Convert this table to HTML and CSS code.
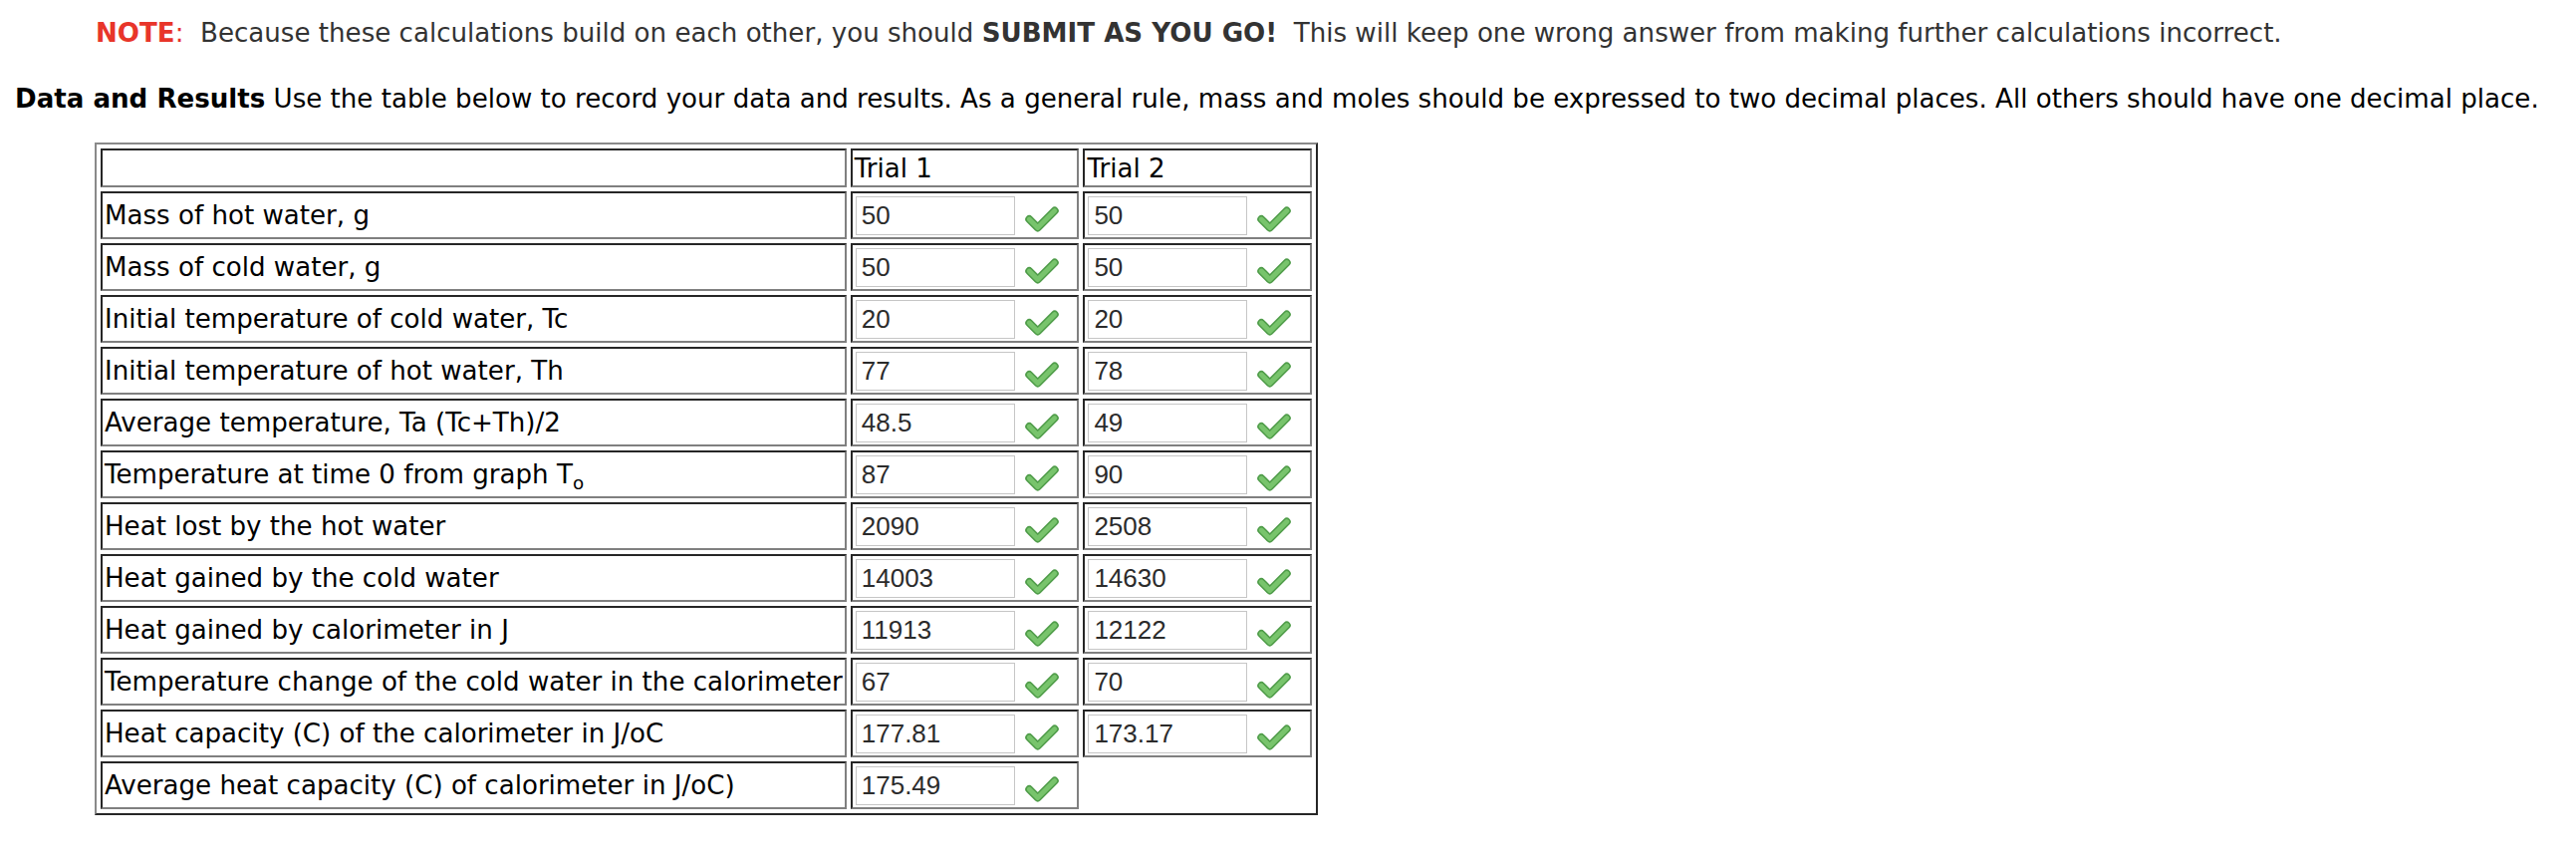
FILE: index.html
```html
<!DOCTYPE html>
<html>
<head>
<meta charset="utf-8">
<title>Data and Results</title>
<link rel="stylesheet" href="styles.css">
</head>
<body>
<div class="note"><span class="note-label">NOTE</span><span class="note-colon">:</span>&nbsp; Because these calculations build on each other, you should <b>SUBMIT AS YOU GO!</b>&nbsp; This will keep one wrong answer from making further calculations incorrect.</div>
<p class="intro"><b>Data and Results</b> Use the table below to record your data and results. As a general rule, mass and moles should be expressed to two decimal places. All others should have one decimal place.</p>
<table class="data">
  <tr class="head-row"><td class="label"></td><td class="trial">Trial 1</td><td class="trial">Trial 2</td></tr>
  <tr><td class="label">Mass of hot water, g</td><td class="trial"><div class="ans"><span class="field">50</span><svg class="check" viewBox="0 0 32 26"><polyline points="4,13 12,21 28,5"/><polyline class="in" points="4,13 12,21 28,5"/></svg></div></td><td class="trial"><div class="ans"><span class="field">50</span><svg class="check" viewBox="0 0 32 26"><polyline points="4,13 12,21 28,5"/><polyline class="in" points="4,13 12,21 28,5"/></svg></div></td></tr>
  <tr><td class="label">Mass of cold water, g</td><td class="trial"><div class="ans"><span class="field">50</span><svg class="check" viewBox="0 0 32 26"><polyline points="4,13 12,21 28,5"/><polyline class="in" points="4,13 12,21 28,5"/></svg></div></td><td class="trial"><div class="ans"><span class="field">50</span><svg class="check" viewBox="0 0 32 26"><polyline points="4,13 12,21 28,5"/><polyline class="in" points="4,13 12,21 28,5"/></svg></div></td></tr>
  <tr><td class="label">Initial temperature of cold water, Tc</td><td class="trial"><div class="ans"><span class="field">20</span><svg class="check" viewBox="0 0 32 26"><polyline points="4,13 12,21 28,5"/><polyline class="in" points="4,13 12,21 28,5"/></svg></div></td><td class="trial"><div class="ans"><span class="field">20</span><svg class="check" viewBox="0 0 32 26"><polyline points="4,13 12,21 28,5"/><polyline class="in" points="4,13 12,21 28,5"/></svg></div></td></tr>
  <tr><td class="label">Initial temperature of hot water, Th</td><td class="trial"><div class="ans"><span class="field">77</span><svg class="check" viewBox="0 0 32 26"><polyline points="4,13 12,21 28,5"/><polyline class="in" points="4,13 12,21 28,5"/></svg></div></td><td class="trial"><div class="ans"><span class="field">78</span><svg class="check" viewBox="0 0 32 26"><polyline points="4,13 12,21 28,5"/><polyline class="in" points="4,13 12,21 28,5"/></svg></div></td></tr>
  <tr><td class="label">Average temperature, Ta (Tc+Th)/2</td><td class="trial"><div class="ans"><span class="field">48.5</span><svg class="check" viewBox="0 0 32 26"><polyline points="4,13 12,21 28,5"/><polyline class="in" points="4,13 12,21 28,5"/></svg></div></td><td class="trial"><div class="ans"><span class="field">49</span><svg class="check" viewBox="0 0 32 26"><polyline points="4,13 12,21 28,5"/><polyline class="in" points="4,13 12,21 28,5"/></svg></div></td></tr>
  <tr><td class="label">Temperature at time 0 from graph T<sub>o</sub></td><td class="trial"><div class="ans"><span class="field">87</span><svg class="check" viewBox="0 0 32 26"><polyline points="4,13 12,21 28,5"/><polyline class="in" points="4,13 12,21 28,5"/></svg></div></td><td class="trial"><div class="ans"><span class="field">90</span><svg class="check" viewBox="0 0 32 26"><polyline points="4,13 12,21 28,5"/><polyline class="in" points="4,13 12,21 28,5"/></svg></div></td></tr>
  <tr><td class="label">Heat lost by the hot water</td><td class="trial"><div class="ans"><span class="field">2090</span><svg class="check" viewBox="0 0 32 26"><polyline points="4,13 12,21 28,5"/><polyline class="in" points="4,13 12,21 28,5"/></svg></div></td><td class="trial"><div class="ans"><span class="field">2508</span><svg class="check" viewBox="0 0 32 26"><polyline points="4,13 12,21 28,5"/><polyline class="in" points="4,13 12,21 28,5"/></svg></div></td></tr>
  <tr><td class="label">Heat gained by the cold water</td><td class="trial"><div class="ans"><span class="field">14003</span><svg class="check" viewBox="0 0 32 26"><polyline points="4,13 12,21 28,5"/><polyline class="in" points="4,13 12,21 28,5"/></svg></div></td><td class="trial"><div class="ans"><span class="field">14630</span><svg class="check" viewBox="0 0 32 26"><polyline points="4,13 12,21 28,5"/><polyline class="in" points="4,13 12,21 28,5"/></svg></div></td></tr>
  <tr><td class="label">Heat gained by calorimeter in J</td><td class="trial"><div class="ans"><span class="field">11913</span><svg class="check" viewBox="0 0 32 26"><polyline points="4,13 12,21 28,5"/><polyline class="in" points="4,13 12,21 28,5"/></svg></div></td><td class="trial"><div class="ans"><span class="field">12122</span><svg class="check" viewBox="0 0 32 26"><polyline points="4,13 12,21 28,5"/><polyline class="in" points="4,13 12,21 28,5"/></svg></div></td></tr>
  <tr><td class="label">Temperature change of the cold water in the calorimeter</td><td class="trial"><div class="ans"><span class="field">67</span><svg class="check" viewBox="0 0 32 26"><polyline points="4,13 12,21 28,5"/><polyline class="in" points="4,13 12,21 28,5"/></svg></div></td><td class="trial"><div class="ans"><span class="field">70</span><svg class="check" viewBox="0 0 32 26"><polyline points="4,13 12,21 28,5"/><polyline class="in" points="4,13 12,21 28,5"/></svg></div></td></tr>
  <tr><td class="label">Heat capacity (C) of the calorimeter in J/oC</td><td class="trial"><div class="ans"><span class="field">177.81</span><svg class="check" viewBox="0 0 32 26"><polyline points="4,13 12,21 28,5"/><polyline class="in" points="4,13 12,21 28,5"/></svg></div></td><td class="trial"><div class="ans"><span class="field">173.17</span><svg class="check" viewBox="0 0 32 26"><polyline points="4,13 12,21 28,5"/><polyline class="in" points="4,13 12,21 28,5"/></svg></div></td></tr>
  <tr><td class="label">Average heat capacity (C) of calorimeter in J/oC)</td><td class="trial"><div class="ans"><span class="field">175.49</span><svg class="check" viewBox="0 0 32 26"><polyline points="4,13 12,21 28,5"/><polyline class="in" points="4,13 12,21 28,5"/></svg></div></td></tr>
</table>
</body>
</html>
```
FILE: styles.css
```css
html, body {
  margin: 0;
  padding: 0;
  background: #fff;
}
body {
  font-family: "DejaVu Sans", Verdana, sans-serif;
  font-size: 26.1px;
  color: #000;
}
.note {
  padding: 17px 0 0 96px;
  line-height: 32px;
  color: #333;
  white-space: nowrap;
}
.note-label {
  color: #e8352a;
  font-weight: bold;
}
.note-colon {
  color: #e8352a;
}
.intro {
  margin: 34px 0 0 0;
  padding-left: 15px;
  line-height: 32px;
  white-space: nowrap;
}
.data {
  margin: 28px 0 0 95px;
  width: 1228px;
  border-collapse: separate;
  border-spacing: 4px;
  border-style: solid;
  border-width: 2px;
  border-color: #8a8a8a #262626 #262626 #8a8a8a;
}
.data td {
  box-sizing: border-box;
  border-style: solid;
  border-width: 2px;
  border-color: #262626 #808080 #808080 #262626;
  padding: 2px;
  vertical-align: middle;
  line-height: 30px;
}
.data .label {
  white-space: nowrap;
}
.data .trial {
  width: 233px;
}
.head-row td {
  height: 39px;
}
.data sub {
  font-size: 0.7em;
  line-height: 0;
}
.ans {
  display: flex;
  align-items: flex-start;
  padding: 1px 0 0 1px;
}
.field {
  box-sizing: border-box;
  width: 160px;
  height: 39px;
  border: 1px solid #c6c6c6;
  padding: 0 5px;
  font-family: "Liberation Sans", Arial, sans-serif;
  font-size: 26px;
  line-height: 37px;
  color: #2b2b2b;
  background: #fff;
}
.check {
  width: 34px;
  height: 28px;
  margin: 9px 0 0 10px;
}
.check polyline {
  fill: none;
  stroke: #4f9c49;
  stroke-width: 7.5;
  stroke-linecap: round;
  stroke-linejoin: round;
}
.check polyline.in {
  stroke: #78c46c;
  stroke-width: 4.5;
}
```
